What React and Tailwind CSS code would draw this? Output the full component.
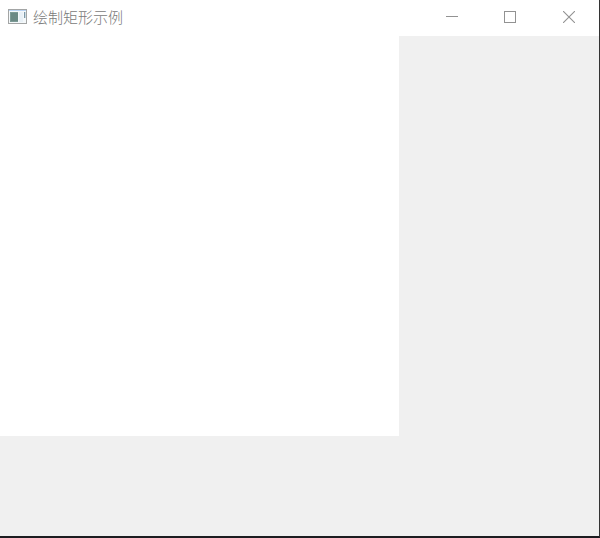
import React from "react";

const AppIcon = () => (
  <svg width="19" height="15" viewBox="0 0 19 15" shapeRendering="crispEdges">
    <rect width="19" height="15" fill="#a3a5a5" />
    <rect x="1" y="1" width="17" height="1" fill="#b9d3f2" />
    <rect x="1" y="2" width="17" height="12" fill="#f4f8fa" />
    <rect x="2" y="3" width="8" height="10" fill="#7c9b96" />
    <rect x="3" y="4" width="7" height="8" fill="#6b8a85" />
    <rect x="11" y="3" width="4" height="10" fill="#e8f0f6" />
    <rect x="16" y="3" width="1" height="6" fill="#7d98a8" />
    <rect x="17" y="3" width="1" height="6" fill="#c9dae2" />
  </svg>
);

const TitleBar = () => (
  <div className="flex h-9 shrink-0 items-start bg-white text-[#929292]">
    <div className="ml-2 mt-[9px]"><AppIcon /></div>
    <h1 className="ml-[6px] mt-[7px] text-[15px] leading-5 font-light text-[#7a7a7a]">绘制矩形示例</h1>
    <div className="ml-auto flex">
      <button aria-label="Minimize" className="flex h-[34px] w-[58px] items-center justify-center">
        <svg width="12" height="12" shapeRendering="crispEdges"><rect y="5" width="12" height="1" fill="currentColor" /></svg>
      </button>
      <button aria-label="Maximize" className="flex h-[34px] w-[58px] items-center justify-center">
        <svg width="12" height="12" fill="none" stroke="currentColor"><rect x="0.5" y="0.5" width="11" height="11" /></svg>
      </button>
      <button aria-label="Close" className="flex h-[34px] w-[60px] items-center justify-center">
        <svg width="12" height="12" fill="none" stroke="currentColor" strokeWidth="1.1"><path d="M0 0L12 12M12 0L0 12" /></svg>
      </button>
    </div>
  </div>
);

const App = () => {
  return (
    <div className="flex h-[538px] w-[600px] flex-col overflow-hidden border-r border-b-2 border-r-[#333333] border-b-[#1c1c20] bg-[#f0f0f0] font-['Noto_Sans_CJK_SC',sans-serif]">
      <TitleBar />
      <main className="flex-1">
        <div className="h-[400px] w-[399px] bg-white" />
      </main>
    </div>
  );
};

export default App;
